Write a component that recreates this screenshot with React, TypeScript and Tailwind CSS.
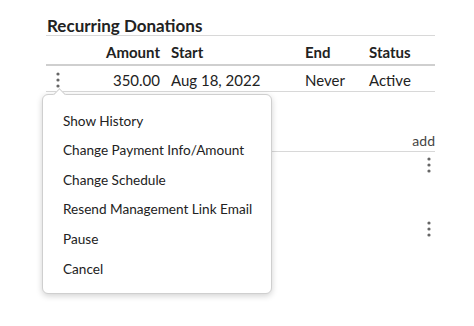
import React from 'react'

const menuItems = [
  'Show History',
  'Change Payment Info/Amount',
  'Change Schedule',
  'Resend Management Link Email',
  'Pause',
  'Cancel',
]

const Dots: React.FC<{ className?: string }> = ({ className }) => (
  <svg width="4" height="16" viewBox="0 0 4 16" className={className}>
    <circle cx="2" cy="2" r="1.6" fill="#666" />
    <circle cx="2" cy="8" r="1.6" fill="#666" />
    <circle cx="2" cy="14" r="1.6" fill="#666" />
  </svg>
)

export default function App() {
  return (
    <div
      className="relative w-[474px] h-[326px] bg-white text-[#222]"
      style={{ fontFamily: 'Lato, "Open Sans", sans-serif' }}
    >
      <div className="pl-[46px] pt-[17px] w-[435px]">
        <h2 className="text-[17px] font-bold leading-[17px] pl-[1px]">Recurring Donations</h2>
        <div className="border-b border-[#d8d8d8] mt-[1px]" />

        {/* header */}
        <div className="grid grid-cols-[114px_145px_64px_1fr] h-[30px] pt-[4px] items-center text-[15px] font-bold border-b-2 border-[#cfcfcf]">
          <div className="text-right">Amount</div>
          <div className="pl-[11px]">Start</div>
          <div>End</div>
          <div>Status</div>
        </div>

        {/* row */}
        <div className="grid grid-cols-[114px_145px_64px_1fr] h-[26px] pt-[3px] items-center text-[15px] border-b border-[#d8d8d8]">
          <div className="flex items-center justify-between">
            <Dots className="ml-[10px]" />
            <span>350.00</span>
          </div>
          <div className="pl-[11px]">Aug 18, 2022</div>
          <div>Never</div>
          <div>Active</div>
        </div>

        {/* second section, mostly hidden under the menu */}
        <div className="mt-[40px] flex justify-end text-[14px] text-[#444] leading-[18px]">add</div>
        <div className="border-b border-[#d8d8d8] mt-[1px]" />
        <div className="h-[69px] flex items-start justify-end pt-[5px] pr-[4px]">
          <Dots />
        </div>
        <div className="flex justify-end pr-[4px]">
          <Dots />
        </div>
      </div>

      {/* dropdown menu */}
      <div className="absolute left-[42px] top-[94px] w-[230px] h-[200px] bg-white rounded-[6px] border border-[#cfcfcf] shadow-[0_2px_6px_rgba(0,0,0,0.18)]">
        <div className="absolute left-[12px] -top-[5px] w-[9px] h-[9px] rotate-45 bg-white border-l border-t border-[#cfcfcf]" />
        <ul className="pt-[11px] pl-[20px] text-[13.6px]">
          {menuItems.map((item) => (
            <li key={item} className="h-[29.6px] flex items-center">
              {item}
            </li>
          ))}
        </ul>
      </div>
    </div>
  )
}
